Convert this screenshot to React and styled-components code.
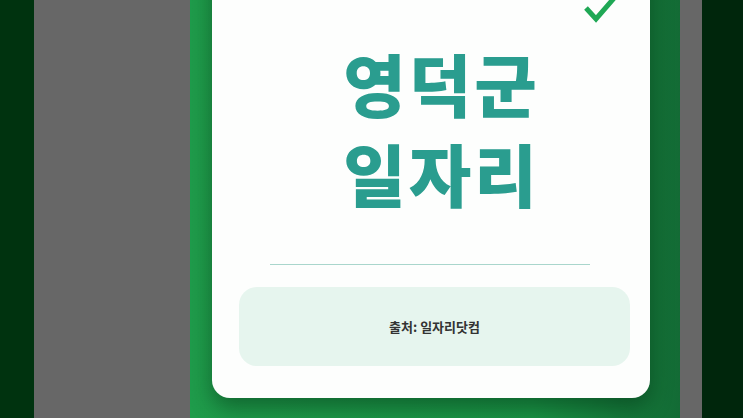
import styled, { createGlobalStyle } from "styled-components";

const GlobalStyle = createGlobalStyle`
  html, body {
    margin: 0;
    padding: 0;
    background: #666666;
  }
  #root {
    height: 100vh;
  }
`;

const Frame = styled.div`
  display: flex;
  height: 418px;
  width: 743px;
  overflow: hidden;
  font-family: "Noto Sans CJK KR", "Noto Sans", sans-serif;
`;

const Edge = styled.div`
  width: ${({ w }) => w}px;
  flex-shrink: 0;
  background: ${({ bg }) => bg};
`;

const Stage = styled.div`
  width: 490px;
  flex-shrink: 0;
  display: flex;
  align-items: flex-end;
  padding: 0 30px 20px 22px;
  box-sizing: border-box;
  overflow: hidden;
  background: linear-gradient(90deg, #1f9c4b 0%, #1a9446 70%, #136b35 100%);
`;

const Card = styled.div`
  position: relative;
  width: 438px;
  height: 460px;
  flex-shrink: 0;
  background: #fdfefd;
  border-radius: 18px;
  box-shadow: 0 10px 22px rgba(0, 40, 15, 0.45);
  display: flex;
  flex-direction: column;
  justify-content: flex-end;
  align-items: center;
  padding: 0 20px 32px 27px;
  box-sizing: border-box;
`;

const Check = styled.svg`
  position: absolute;
  top: 58px;
  right: 32px;
`;

const Title = styled.h1`
  margin: 0;
  padding-left: 14px;
  font-size: 68px;
  line-height: 90px;
  letter-spacing: 3px;
  font-weight: 900;
  color: #2a9d8f;
  text-align: center;
`;

const Divider = styled.hr`
  width: 320px;
  margin: 46px 9px 22px 0;
  border: none;
  border-top: 1.5px solid #a9d6cc;
`;

const SourceBox = styled.div`
  align-self: stretch;
  height: 79px;
  border-radius: 18px;
  background: #e6f5ee;
  display: flex;
  align-items: center;
  justify-content: center;
`;

const SourceText = styled.span`
  font-size: 13px;
  font-weight: 700;
  color: #333333;
`;

export default function App() {
  return (
    <>
      <GlobalStyle />
      <Frame>
        <Edge w={34} bg="#00330f" />
        <Edge w={156} bg="#676767" />
        <Stage>
          <Card>
            <Check width="36" height="30" viewBox="0 0 36 30">
              <path
                d="M4 12 L14 23 L33 1"
                fill="none"
                stroke="#1fa855"
                strokeWidth="5"
                strokeLinecap="butt"
                strokeLinejoin="miter"
              />
            </Check>
            <Title>
              영덕군
              <br />
              일자리
            </Title>
            <Divider />
            <SourceBox>
              <SourceText>출처: 일자리닷컴</SourceText>
            </SourceBox>
          </Card>
        </Stage>
        <Edge w={22} bg="#676767" />
        <Edge w={41} bg="#00260c" />
      </Frame>
    </>
  );
}
